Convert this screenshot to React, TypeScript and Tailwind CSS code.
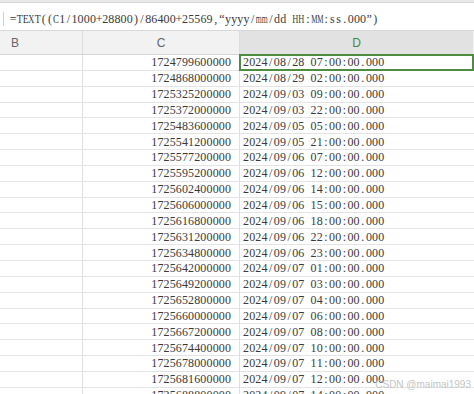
import React from 'react';

const rows: [string, string][] = [
  ['1724799600000', '2024/08/28 07:00:00.000'],
  ['1724868000000', '2024/08/29 02:00:00.000'],
  ['1725325200000', '2024/09/03 09:00:00.000'],
  ['1725372000000', '2024/09/03 22:00:00.000'],
  ['1725483600000', '2024/09/05 05:00:00.000'],
  ['1725541200000', '2024/09/05 21:00:00.000'],
  ['1725577200000', '2024/09/06 07:00:00.000'],
  ['1725595200000', '2024/09/06 12:00:00.000'],
  ['1725602400000', '2024/09/06 14:00:00.000'],
  ['1725606000000', '2024/09/06 15:00:00.000'],
  ['1725616800000', '2024/09/06 18:00:00.000'],
  ['1725631200000', '2024/09/06 22:00:00.000'],
  ['1725634800000', '2024/09/06 23:00:00.000'],
  ['1725642000000', '2024/09/07 01:00:00.000'],
  ['1725649200000', '2024/09/07 03:00:00.000'],
  ['1725652800000', '2024/09/07 04:00:00.000'],
  ['1725660000000', '2024/09/07 06:00:00.000'],
  ['1725667200000', '2024/09/07 08:00:00.000'],
  ['1725674400000', '2024/09/07 10:00:00.000'],
  ['1725678000000', '2024/09/07 11:00:00.000'],
  ['1725681600000', '2024/09/07 12:00:00.000'],
  ['1725688800000', '2024/09/07 14:00:00.000'],
];

// squeeze the wide latin letters so they fit the half-width box
const squeeze: Record<string, string> = {
  T: 'scale-x-[0.82]',
  E: 'scale-x-[0.82]',
  X: 'scale-x-[0.7]',
  C: 'scale-x-[0.76]',
  H: 'scale-x-[0.7]',
  M: 'scale-x-[0.58]',
  m: 'scale-x-[0.64]',
};

// half-width ascii like SimSun: every char gets the same box
const Mono: React.FC<{ text: string }> = ({ text }) => (
  <span className="inline-flex font-['Liberation_Serif','Noto_Sans_CJK_SC',serif] text-[12px] leading-none">
    {text.split('').map((ch, i) => (
      <span key={i} className="inline-flex w-[6.15px] justify-center whitespace-pre">
        <span className={squeeze[ch] ? `inline-block ${squeeze[ch]}` : 'inline-block'}>{ch}</span>
      </span>
    ))}
  </span>
);

const App: React.FC = () => {
  return (
    <div className="relative w-[474px] h-[394px] overflow-hidden bg-white text-[#3a3a3a]">
      <div className="h-[3px] bg-[#e8e8e8] border-b border-[#d6d6d6]" />
      <div className="h-[28px] flex items-center pt-[5px] border-b border-[#d8d8d8]">
        <div className="w-px h-[14px] bg-[#d0d0d0] ml-[3px] mr-[6px]" />
        <Mono text="=TEXT((C1/1000+28800)/86400+25569,“yyyy/mm/dd HH:MM:ss.000”)" />
      </div>

      <div className="flex h-[24px] border-b border-[#d4d4d4] font-['Liberation_Sans',sans-serif] text-[12px]">
        <div className="w-[83px] flex items-center pl-[11px] bg-[#f2f2f2] border-r border-[#dcdcdc] text-[#666]">B</div>
        <div className="w-[157px] flex items-center justify-center bg-[#f2f2f2] border-r border-[#dcdcdc] text-[#666]">C</div>
        <div className="w-[233px] flex items-center justify-center bg-[#e2e2e2] text-[#3f8a3c]">D</div>
        <div className="flex-1 bg-[#f2f2f2]" />
      </div>

      <div>
        {rows.map(([ms, date], i) => (
          <div key={ms} className="flex h-[15.85px] border-b border-[#e4e4e4]">
            <div className="w-[83px] border-r border-[#e0e0e0]" />
            <div className="w-[157px] flex items-center justify-end pr-[8px] border-r border-[#e0e0e0]">
              <Mono text={ms} />
            </div>
            <div
              className={
                i === 0
                  ? 'w-[233px] flex items-center pl-[3px] outline-2 outline-solid outline-[#4e8d40] -outline-offset-1'
                  : 'w-[233px] flex items-center pl-[3px]'
              }
            >
              <Mono text={date} />
            </div>
          </div>
        ))}
      </div>

      <div className="absolute right-[3px] top-[380px] font-['Liberation_Sans',sans-serif] text-[10px] leading-none text-[#c4c4c4]">
        CSDN @maimai1993
      </div>
    </div>
  );
};

export default App;
